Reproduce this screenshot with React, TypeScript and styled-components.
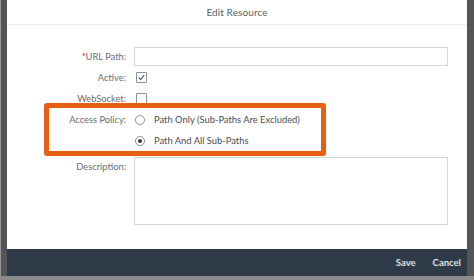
import React from "react";
import styled, { createGlobalStyle } from "styled-components";

const Global = createGlobalStyle`
  html, body { margin: 0; padding: 0; }
  body {
    width: 474px;
    height: 280px;
    overflow: hidden;
    background: #5c5c5c;
    font-family: "Lato", "Open Sans", sans-serif;
  }
`;

const Screen = styled.div`
  width: 474px;
  height: 280px;
  display: flex;
  flex-direction: column;
  background: linear-gradient(to bottom, transparent 0 276px, #8c8c8c 276px),
    linear-gradient(to right, #9a9a9a 0 1px, #555 1px);
  position: relative;
`;

const Dialog = styled.div`
  margin-left: 7px;
  width: 460px;
  height: 276px;
  background: #ffffff;
  display: flex;
  flex-direction: column;
`;

const Header = styled.div`
  height: 24px;
  border-bottom: 1px solid #ececec;
  display: flex;
  align-items: center;
  justify-content: center;
  font-size: 10px;
  color: #5a5d60;
  letter-spacing: 0.1px;
`;

const Form = styled.div`
  flex: 1;
  display: grid;
  grid-template-columns: 119px 1fr;
  grid-auto-rows: 21px;
  column-gap: 8px;
  padding: 21px 19px 0 0;
  align-items: center;
`;

const Label = styled.div<{ $top?: boolean }>`
  text-align: right;
  font-size: 9.3px;
  color: #6a6d70;
  align-self: ${(p) => (p.$top ? "start" : "center")};
  padding-top: ${(p) => (p.$top ? "10px" : "0")};
`;

const Req = styled.span`
  color: #c2281a;
`;

const Input = styled.div`
  height: 19px;
  box-sizing: border-box;
  border: 1px solid #d4d6d8;
  background: #fff;
`;

const TextArea = styled.div`
  height: 68px;
  box-sizing: border-box;
  border: 1px solid #d4d6d8;
  background: #fff;
  margin-top: 6px;
`;

const DescRow = styled.div`
  grid-column: 1 / span 2;
  display: grid;
  grid-template-columns: 119px 1fr;
  column-gap: 8px;
  align-self: start;
`;

const Box = styled.div`
  width: 11px;
  height: 11px;
  box-sizing: border-box;
  border: 1px solid #8b9096;
  border-radius: 1px;
  margin-left: 2px;
  display: flex;
  align-items: center;
  justify-content: center;
`;

const RadioOption = styled.div`
  display: flex;
  align-items: center;
  gap: 9px;
  font-size: 9.4px;
  color: #4a4e52;
  padding-left: 1px;
`;

const Circle = styled.div<{ $on?: boolean }>`
  width: 10px;
  height: 10px;
  box-sizing: border-box;
  border: 1px solid #8b9096;
  border-radius: 50%;
  display: flex;
  align-items: center;
  justify-content: center;
  &::after {
    content: "";
    width: 4px;
    height: 4px;
    border-radius: 50%;
    background: ${(p) => (p.$on ? "#2f3c4b" : "transparent")};
  }
`;

const Footer = styled.div`
  height: 27px;
  background: #2e3a48;
  display: flex;
  align-items: center;
  justify-content: flex-end;
  gap: 17px;
  padding-right: 6px;
  margin-top: auto;
`;

const FooterBtn = styled.span`
  font-size: 9.5px;
  font-weight: 700;
  color: #dbe2ea;
`;

const Highlight = styled.div`
  position: absolute;
  left: 44px;
  top: 103px;
  width: 282px;
  height: 53px;
  box-sizing: border-box;
  border: 5px solid #e85f12;
  border-radius: 3px;
  pointer-events: none;
`;

const Empty = styled.div``;

export default function App() {
  return (
    <>
      <Global />
      <Screen>
        <Dialog>
          <Header>Edit Resource</Header>
          <Form>
            <Label>
              <Req>*</Req>URL Path:
            </Label>
            <Input />
            <Label>Active:</Label>
            <Box>
              <svg width="9" height="9" viewBox="0 0 9 9">
                <path d="M1.8 4.6 L3.6 6.5 L7.2 2.2" fill="none" stroke="#3a5470" strokeWidth="1.1" />
              </svg>
            </Box>
            <Label>WebSocket:</Label>
            <Box />
            <Label>Access Policy:</Label>
            <RadioOption>
              <Circle />
              Path Only (Sub-Paths Are Excluded)
            </RadioOption>
            <Empty />
            <RadioOption>
              <Circle $on />
              Path And All Sub-Paths
            </RadioOption>
            <DescRow>
              <Label $top>Description:</Label>
              <TextArea />
            </DescRow>
          </Form>
          <Footer>
            <FooterBtn>Save</FooterBtn>
            <FooterBtn>Cancel</FooterBtn>
          </Footer>
        </Dialog>
        <Highlight />
      </Screen>
    </>
  );
}
